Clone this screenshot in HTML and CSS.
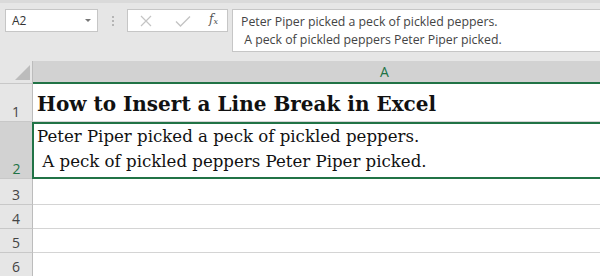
FILE: index.html
```html
<!doctype html>
<html>
	<head>
		<title>Line break in Excel</title>
		<link rel="stylesheet" href="styles.css">
	</head>
	<body>
		<div class="formulaBar">
			<div class="nameBox">
				<span class="nameText">A2</span>
				<span class="nameArrow"></span>
			</div>
			<div class="barDots">
				<span></span><span></span><span></span>
			</div>
			<div class="fxButtons">
				<svg class="fxIcon" width="12" height="12" viewBox="0 0 12 12">
					<path d="M1 1 L11 11 M11 1 L1 11" stroke="#c4c4c4" stroke-width="1.2" fill="none" />
				</svg>
				<svg class="fxIcon" width="16" height="12" viewBox="0 0 16 12">
					<path d="M1 6.5 L5.5 11 L15 1.5" stroke="#c4c4c4" stroke-width="1.4" fill="none" />
				</svg>
				<span class="fxText">f<sub>x</sub></span>
			</div>
			<div class="formulaBox">
				<div>Peter Piper picked a peck of pickled peppers.</div>
				<div>&nbsp;A peck of pickled peppers Peter Piper picked.</div>
			</div>
		</div>

		<div class="sheet">
			<div class="sheetRow headRow">
				<div class="rowHead cornerCell"><span class="cornerTri"></span></div>
				<div class="colHead">A</div>
			</div>
			<div class="sheetRow row1">
				<div class="rowHead">1</div>
				<div class="cell titleCell">How to Insert a Line Break in Excel</div>
			</div>
			<div class="sheetRow row2">
				<div class="rowHead rowHeadActive">2</div>
				<div class="cell activeCell">
					<div>Peter Piper picked a peck of pickled peppers.</div>
					<div>&nbsp;A peck of pickled peppers Peter Piper picked.</div>
				</div>
			</div>
			<div class="sheetRow row3">
				<div class="rowHead">3</div>
				<div class="cell"></div>
			</div>
			<div class="sheetRow rowStd">
				<div class="rowHead">4</div>
				<div class="cell"></div>
			</div>
			<div class="sheetRow rowStd">
				<div class="rowHead">5</div>
				<div class="cell"></div>
			</div>
			<div class="sheetRow rowStd">
				<div class="rowHead">6</div>
				<div class="cell"></div>
			</div>
		</div>
	</body>
</html>
```
FILE: styles.css
```css
body {
	margin: 0;
	background: #e6e6e6;
	font-family: "Open Sans", "Noto Sans", sans-serif;
	overflow: hidden;
	width: 600px;
	height: 276px;
}

/* formula bar */
.formulaBar {
	height: 61px;
	border-top: 3px solid #dadada;
	display: flex;
	align-items: flex-start;
	padding-top: 6px;
	box-sizing: border-box;
}

.nameBox {
	margin-left: 5px;
	width: 93px;
	height: 23px;
	box-sizing: border-box;
	background: #ffffff;
	border: 1px solid #c6c6c6;
	display: flex;
	align-items: center;
	justify-content: space-between;
	padding: 0 6px 0 6px;
}

.nameText {
	font-size: 12px;
	color: #333333;
}

.nameArrow {
	width: 0;
	height: 0;
	border-left: 3px solid transparent;
	border-right: 3px solid transparent;
	border-top: 3px solid #777777;
}

.barDots {
	width: 29px;
	height: 23px;
	display: flex;
	flex-direction: column;
	align-items: center;
	justify-content: center;
	gap: 2px;
}

.barDots span {
	width: 2px;
	height: 2px;
	background: #b5b5b5;
}

.fxButtons {
	width: 101px;
	height: 23px;
	box-sizing: border-box;
	background: #ffffff;
	border: 1px solid #c6c6c6;
	display: flex;
	align-items: center;
	padding-left: 12px;
	gap: 23px;
}

.fxText {
	font-family: "DejaVu Serif", serif;
	font-style: italic;
	font-size: 12px;
	color: #555555;
	margin-left: -5px;
	line-height: 12px;
}

.fxText sub {
	font-size: 8px;
	vertical-align: -1px;
}

.formulaBox {
	margin-left: 4px;
	flex: 1;
	height: 43px;
	box-sizing: border-box;
	background: #ffffff;
	border: 1px solid #c6c6c6;
	border-right: none;
	padding: 3px 0 0 8px;
	font-size: 12.3px;
	line-height: 18px;
	color: #444444;
}

/* sheet grid */
.sheet {
	display: flex;
	flex-direction: column;
}

.sheetRow {
	display: flex;
}

.rowHead {
	width: 33px;
	flex: none;
	box-sizing: border-box;
	border-right: 1px solid #bcbcbc;
	border-bottom: 1px solid #c8c8c8;
	background: #e6e6e6;
	font-size: 14px;
	color: #444444;
	display: flex;
	align-items: flex-end;
	justify-content: center;
	padding-bottom: 0;
}

.cell {
	flex: 1;
	background: #ffffff;
	border-bottom: 1px solid #d4d4d4;
	font-family: "DejaVu Serif", serif;
	color: #111111;
	white-space: nowrap;
}

.headRow {
	height: 23px;
}

.cornerCell {
	position: relative;
	border-bottom: 1px solid #c8c8c8;
}

.cornerTri {
	position: absolute;
	right: 2px;
	bottom: 3px;
	width: 0;
	height: 0;
	border-left: 15px solid transparent;
	border-bottom: 15px solid #bcbcbc;
}

.colHead {
	flex: 1;
	background: #d2d2d2;
	border-bottom: 2px solid #217346;
	color: #217346;
	font-size: 14px;
	text-align: center;
	padding-left: 136px;
	line-height: 21px;
}

.row1 {
	height: 38px;
}

.titleCell {
	font-weight: bold;
	font-size: 20px;
	padding: 8px 0 0 4px;
}

.row2 {
	height: 57px;
}

.rowHeadActive {
	background: #d2d2d2;
	color: #217346;
	border-right: none;
}

.activeCell {
	border: 2px solid #217346;
	border-right: none;
	margin-left: -1px;
	font-size: 16.6px;
	line-height: 25px;
	padding: 0 0 0 3px;
}

.row3 {
	height: 26px;
}

.rowStd {
	height: 24px;
}
```
